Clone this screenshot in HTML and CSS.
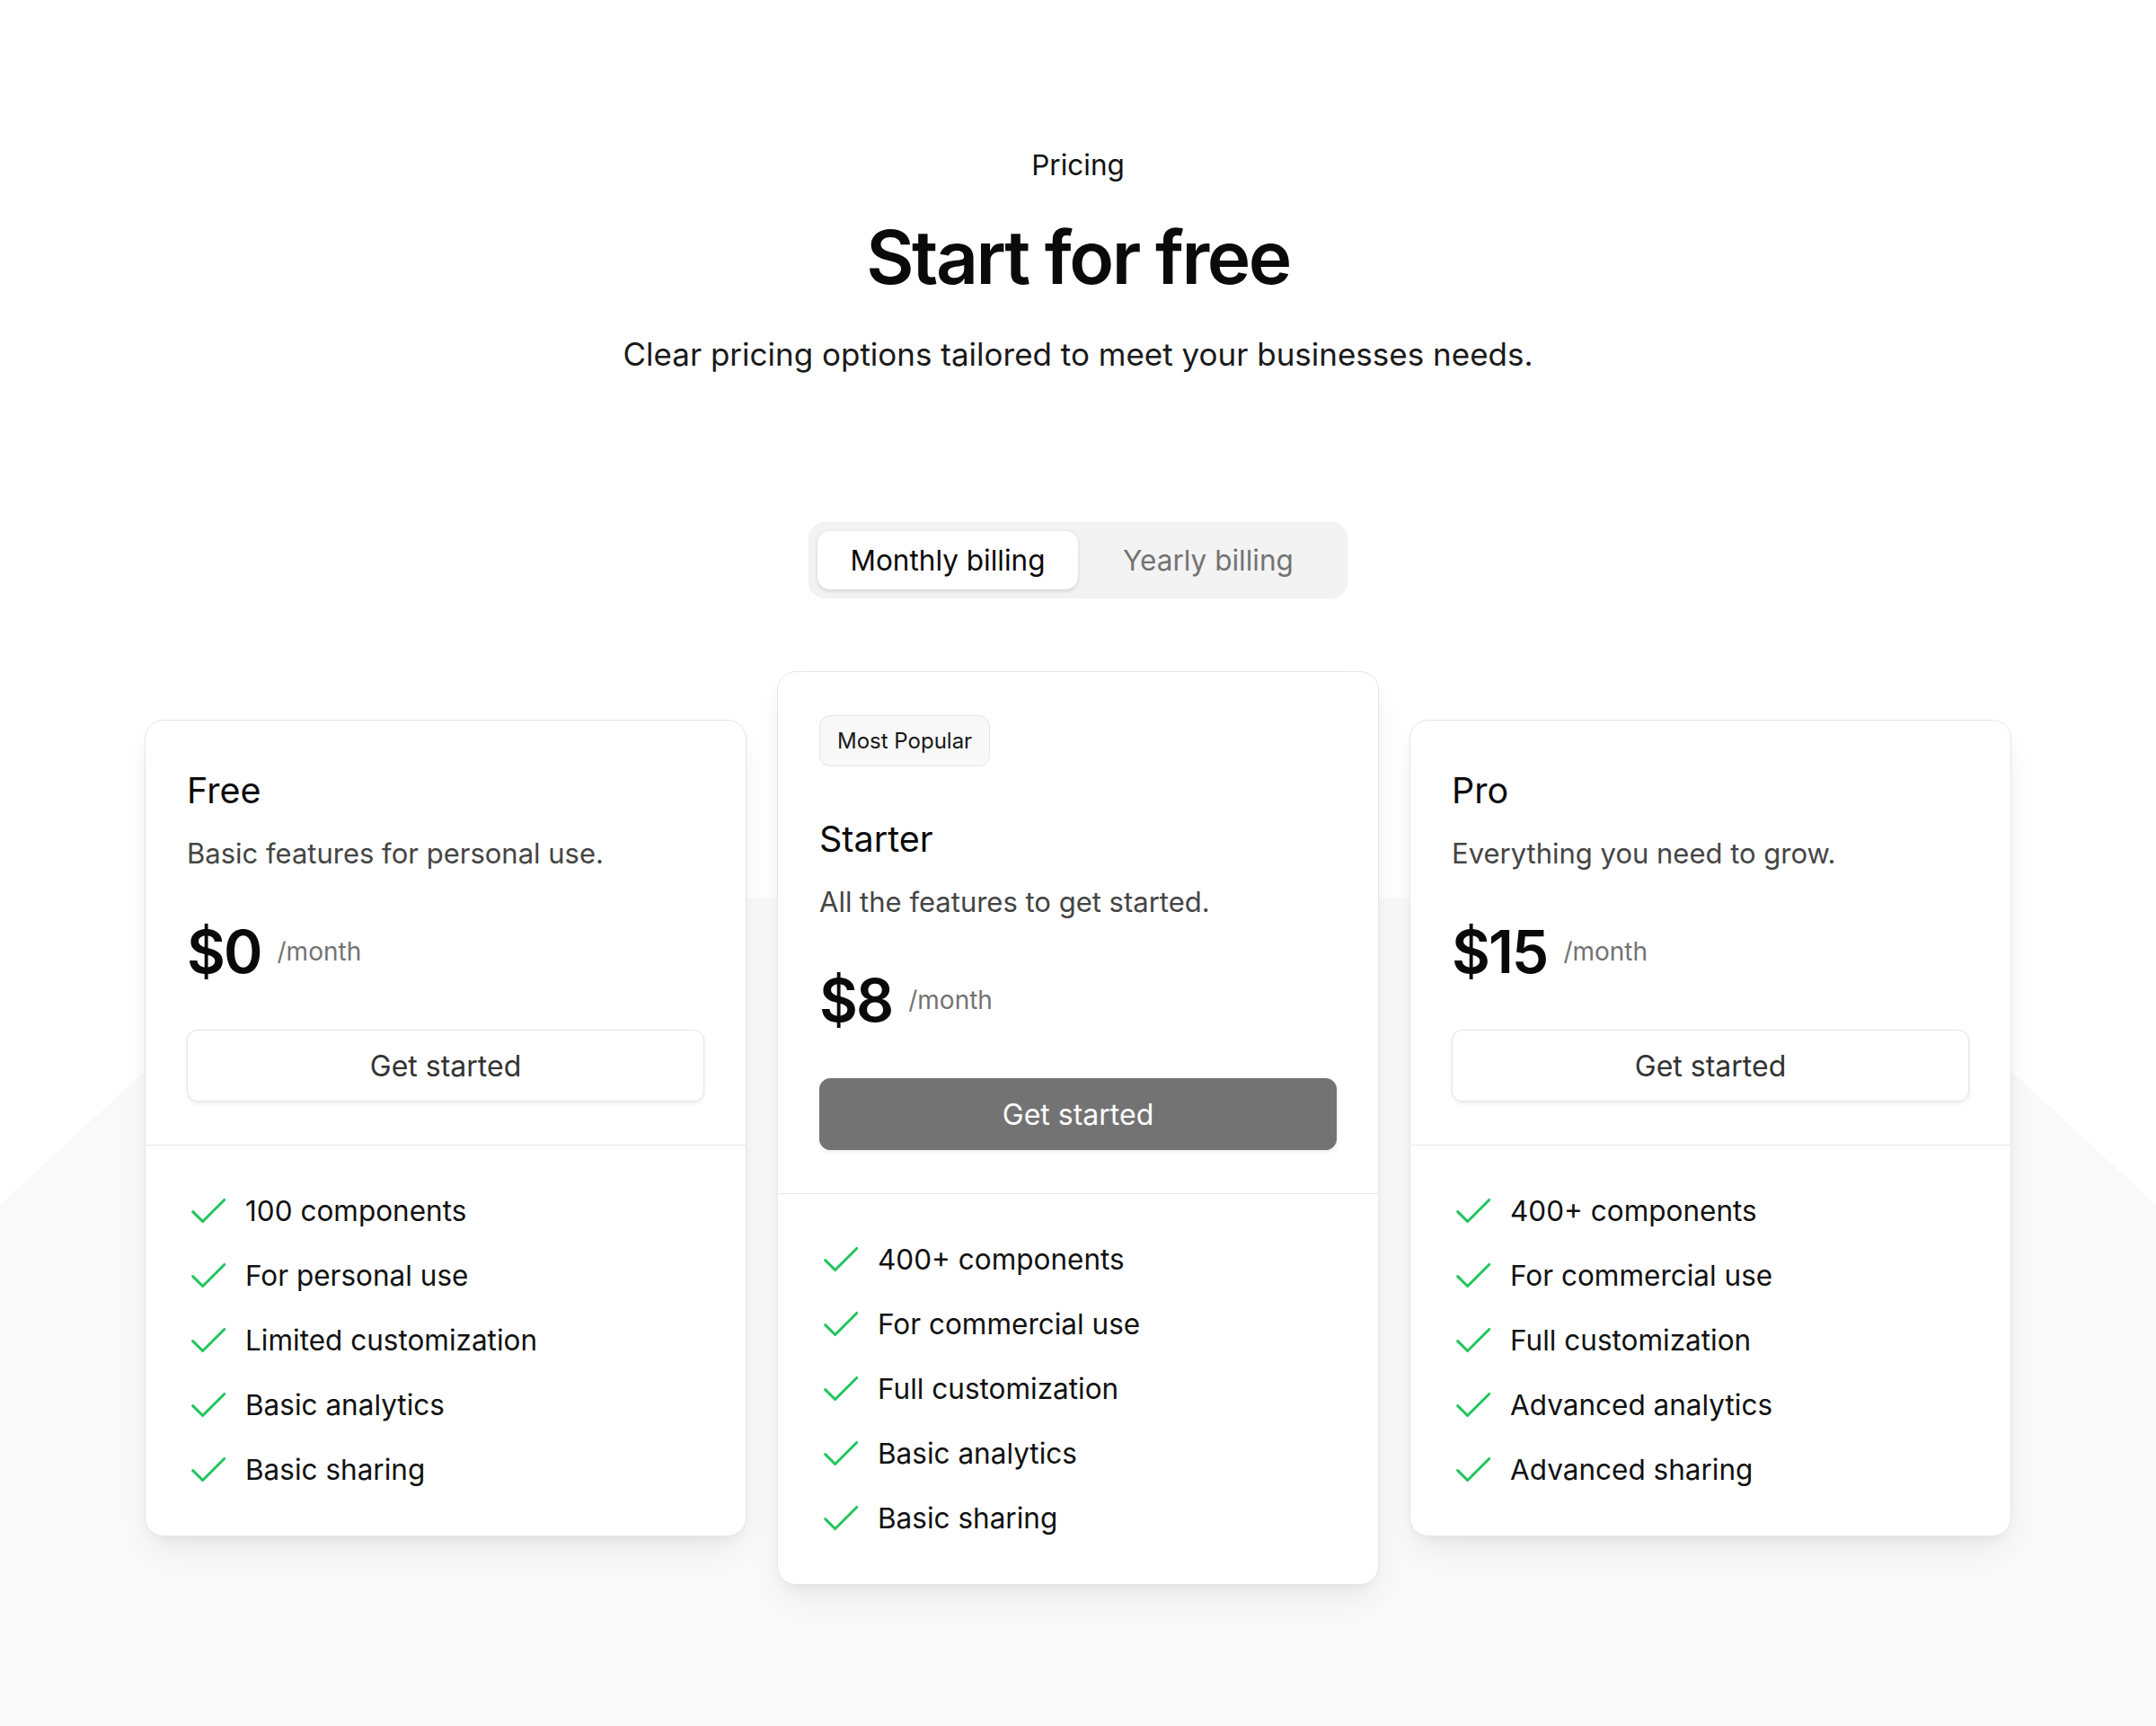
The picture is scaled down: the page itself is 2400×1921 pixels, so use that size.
FILE: index.html
```html
<!DOCTYPE html>
<html lang="en">
<head>
<meta charset="utf-8">
<title>Pricing</title>
<link rel="stylesheet" href="styles.css">
</head>
<body>
<div class="page">
  <div class="bg-shape"></div>
  <main class="content">
    <header class="intro">
      <p class="eyebrow">Pricing</p>
      <h1 class="headline">Start for free</h1>
      <p class="lead">Clear pricing options tailored to meet your businesses needs.</p>
    </header>

    <div class="toggle">
      <button class="toggle-btn active">Monthly billing</button>
      <button class="toggle-btn">Yearly billing</button>
    </div>

    <section class="plans">
      <article class="card">
        <div class="card-top">
          <h2 class="plan-name">Free</h2>
          <p class="plan-desc">Basic features for personal use.</p>
          <div class="price-row"><span class="price">$0</span><span class="per">/month</span></div>
          <button class="cta">Get started</button>
        </div>
        <ul class="features">
          <li><svg class="check" viewBox="1 3.5 20 16"><polyline points="20 6 9 17 4 12"/></svg><span>100 components</span></li>
          <li><svg class="check" viewBox="1 3.5 20 16"><polyline points="20 6 9 17 4 12"/></svg><span>For personal use</span></li>
          <li><svg class="check" viewBox="1 3.5 20 16"><polyline points="20 6 9 17 4 12"/></svg><span>Limited customization</span></li>
          <li><svg class="check" viewBox="1 3.5 20 16"><polyline points="20 6 9 17 4 12"/></svg><span>Basic analytics</span></li>
          <li><svg class="check" viewBox="1 3.5 20 16"><polyline points="20 6 9 17 4 12"/></svg><span>Basic sharing</span></li>
        </ul>
      </article>

      <article class="card">
        <div class="card-top">
          <span class="badge">Most Popular</span>
          <h2 class="plan-name">Starter</h2>
          <p class="plan-desc">All the features to get started.</p>
          <div class="price-row"><span class="price">$8</span><span class="per">/month</span></div>
          <button class="cta cta-primary">Get started</button>
        </div>
        <ul class="features">
          <li><svg class="check" viewBox="1 3.5 20 16"><polyline points="20 6 9 17 4 12"/></svg><span>400+ components</span></li>
          <li><svg class="check" viewBox="1 3.5 20 16"><polyline points="20 6 9 17 4 12"/></svg><span>For commercial use</span></li>
          <li><svg class="check" viewBox="1 3.5 20 16"><polyline points="20 6 9 17 4 12"/></svg><span>Full customization</span></li>
          <li><svg class="check" viewBox="1 3.5 20 16"><polyline points="20 6 9 17 4 12"/></svg><span>Basic analytics</span></li>
          <li><svg class="check" viewBox="1 3.5 20 16"><polyline points="20 6 9 17 4 12"/></svg><span>Basic sharing</span></li>
        </ul>
      </article>

      <article class="card">
        <div class="card-top">
          <h2 class="plan-name">Pro</h2>
          <p class="plan-desc">Everything you need to grow.</p>
          <div class="price-row"><span class="price">$15</span><span class="per">/month</span></div>
          <button class="cta">Get started</button>
        </div>
        <ul class="features">
          <li><svg class="check" viewBox="1 3.5 20 16"><polyline points="20 6 9 17 4 12"/></svg><span>400+ components</span></li>
          <li><svg class="check" viewBox="1 3.5 20 16"><polyline points="20 6 9 17 4 12"/></svg><span>For commercial use</span></li>
          <li><svg class="check" viewBox="1 3.5 20 16"><polyline points="20 6 9 17 4 12"/></svg><span>Full customization</span></li>
          <li><svg class="check" viewBox="1 3.5 20 16"><polyline points="20 6 9 17 4 12"/></svg><span>Advanced analytics</span></li>
          <li><svg class="check" viewBox="1 3.5 20 16"><polyline points="20 6 9 17 4 12"/></svg><span>Advanced sharing</span></li>
        </ul>
      </article>
    </section>
  </main>
</div>
</body>
</html>
```

FILE: styles.css
```css
* { box-sizing: border-box; }

html, body {
  margin: 0;
  padding: 0;
  background: #ffffff;
}

body {
  font-family: Inter, "Noto Sans", "Liberation Sans", sans-serif;
  color: #0a0a0a;
}

.page {
  position: relative;
  min-height: 1921px;
  overflow: hidden;
}

.bg-shape {
  position: absolute;
  inset: 0;
  background: #f9f9f9;
  clip-path: polygon(0 1341px, 369px 1000px, 2031px 1000px, 2400px 1341px, 2400px 100%, 0 100%);
  z-index: 0;
}

.content {
  position: relative;
  z-index: 1;
  display: flex;
  flex-direction: column;
  align-items: center;
  padding-top: 161px;
}

.intro {
  text-align: center;
}

.eyebrow {
  margin: 0;
  font-size: 31.5px;
  line-height: 45px;
  font-weight: 400;
  color: #111;
}

.headline {
  margin: 35px 0 0;
  font-size: 82px;
  line-height: 92px;
  font-weight: 600;
  letter-spacing: -0.03em;
  color: #0a0a0a;
}

.lead {
  margin: 39px 0 0;
  font-size: 35px;
  line-height: 45px;
  font-weight: 400;
  color: #1a1a1a;
}

.toggle {
  margin-top: 164px;
  display: grid;
  grid-template-columns: 1fr 1fr;
  width: 600px;
  height: 85px;
  padding: 9px;
  background: #f3f3f3;
  border: 1.5px solid #efefef;
  border-radius: 18px;
}

.toggle-btn {
  font-family: inherit;
  font-size: 31.5px;
  font-weight: 400;
  color: #737373;
  background: transparent;
  border: none;
  border-radius: 14px;
  padding: 0;
}

.toggle-btn.active {
  background: #ffffff;
  color: #0a0a0a;
  box-shadow: 0 1.5px 4px rgba(0, 0, 0, 0.14);
}

.plans {
  margin-top: 81px;
  display: flex;
  align-items: center;
  gap: 34px;
}

.card {
  width: 670px;
  background: #ffffff;
  border: 1.5px solid #e6e6e6;
  border-radius: 21px;
  box-shadow: 0 18px 36px -8px rgba(0, 0, 0, 0.08), 0 6px 14px -4px rgba(0, 0, 0, 0.05);
  overflow: hidden;
}

.card-top {
  padding: 48px 46px;
  border-bottom: 1.5px solid #e6e6e6;
  display: flex;
  flex-direction: column;
  align-items: flex-start;
}

.badge {
  display: inline-flex;
  align-items: center;
  height: 57px;
  padding: 0 19px;
  font-size: 24px;
  color: #171717;
  background: #f8f8f8;
  border: 1.5px solid #e5e5e5;
  border-radius: 12px;
  margin-bottom: 51px;
}

.plan-name {
  margin: 0;
  font-size: 39.5px;
  line-height: 60px;
  font-weight: 400;
  color: #0a0a0a;
}

.plan-desc {
  margin: 20px 0 0;
  font-size: 31px;
  line-height: 40px;
  color: #454545;
}

.price-row {
  margin-top: 56px;
  height: 66px;
  display: flex;
  align-items: center;
  gap: 18px;
}

.price {
  font-size: 66px;
  line-height: 66px;
  font-weight: 600;
  letter-spacing: -0.03em;
  color: #0a0a0a;
}

.per {
  font-size: 28px;
  color: #737373;
}

.cta {
  margin-top: 54px;
  width: 100%;
  height: 80px;
  font-family: inherit;
  font-size: 32px;
  font-weight: 400;
  color: #333333;
  background: #ffffff;
  border: 1.5px solid #e5e5e5;
  border-radius: 12px;
  box-shadow: 0 2px 4px rgba(0, 0, 0, 0.08);
}

.cta-primary {
  background: #737373;
  border-color: #737373;
  color: #ffffff;
}

.features {
  list-style: none;
  margin: 0;
  padding: 49px 46px 50px;
  display: flex;
  flex-direction: column;
  gap: 25px;
}

.features li {
  display: flex;
  align-items: center;
  gap: 21px;
  font-size: 31.5px;
  line-height: 47px;
  color: #111;
}

.check {
  width: 44px;
  height: 35px;
  flex: none;
  fill: none;
  stroke: #22c55e;
  stroke-width: 1.4;
  stroke-linecap: round;
  stroke-linejoin: round;
}
```
